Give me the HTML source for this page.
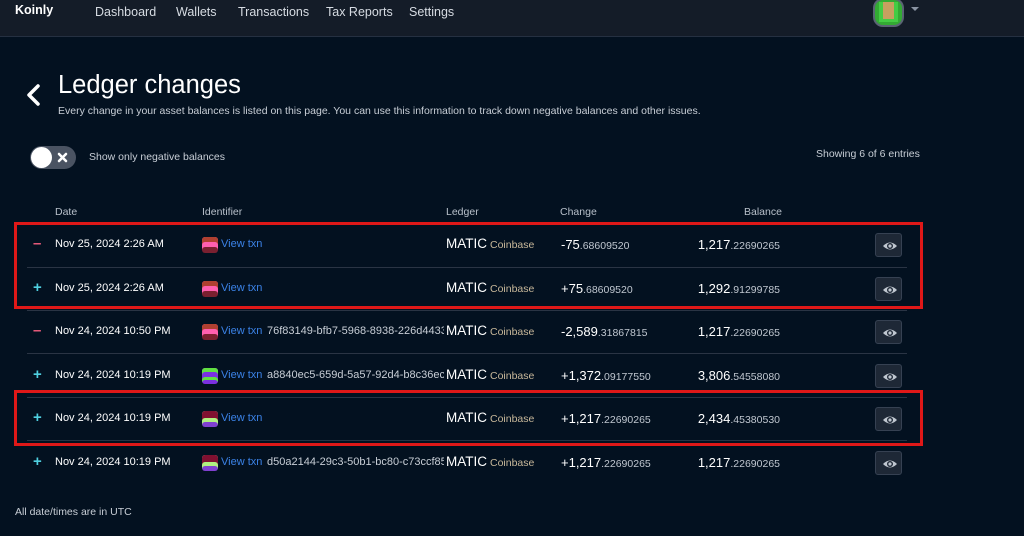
<!DOCTYPE html>
<html><head><style>
*{margin:0;padding:0;box-sizing:border-box}
body{width:1024px;height:536px;background:#031120;font-family:"Liberation Sans",sans-serif;color:#e8ecf0;position:relative;overflow:hidden}
.nav{position:absolute;left:0;top:0;width:1024px;height:37px;background:#141c28;border-bottom:1px solid #253041}
.a{position:absolute;white-space:nowrap}
.nav .a{top:5px;font-size:12.5px;color:#d6dbe2}
.logo{font-weight:bold;font-size:15.5px;color:#fff!important;top:3px!important}
.sep{position:absolute;left:27px;width:880px;height:1px;background:#2a3444}
.row .a{font-size:11px;top:0}
.date{left:55px;color:#fff}
.vt{left:221px;color:#3b82e6}
.hash{left:267px;color:#c8ced6;width:177px;overflow:hidden}
.mat{left:446px;font-size:13.5px!important;color:#fff;top:-2px!important}
.cb{left:490px;color:#c8b89a;font-size:10.5px!important;top:1px!important}
.ch{left:561px;font-size:13px!important;color:#fff;top:-1px!important}
.bal{left:640px;width:140px;text-align:right;font-size:13px!important;color:#fff;top:-1px!important}
small{font-size:10.5px;color:#c0c7d0}
.eye{position:absolute;left:875px;top:-5px;width:27px;height:24px;background:#1e2836;border:1px solid #364152;border-radius:3px}
.eye svg{position:absolute;left:6px;top:5px}
.ic{position:absolute;left:202px;top:-1px;width:16px;height:16px;border-radius:3px}
.red{position:absolute;border:3px solid #e01818}
.sg{position:absolute;left:33px;top:-3px!important;font-size:15px!important;font-weight:bold}
</style></head><body>
<div class="nav">
<div class="a logo" style="left:15px">Koinly</div>
<div class="a" style="left:95px">Dashboard</div>
<div class="a" style="left:176px">Wallets</div>
<div class="a" style="left:238px">Transactions</div>
<div class="a" style="left:326px">Tax Reports</div>
<div class="a" style="left:409px">Settings</div>
<div style="position:absolute;left:873px;top:-2px;width:31px;height:29px;border-radius:10px;border:2px solid #5a6473;background:#3a3;overflow:hidden"><div style="position:absolute;left:4px;top:2px;width:19px;height:20px;background:#c8a060;border:4px solid #4c4;border-top:none;border-bottom-width:3px"></div></div>
<div style="position:absolute;left:911px;top:7px;border:4px solid transparent;border-top:4px solid #8a94a3"></div>
</div>
<svg style="position:absolute;left:24px;top:83px" width="18" height="24"><path d="M14 3 L5 12 L14 21" stroke="#fff" stroke-width="3.5" fill="none" stroke-linecap="round" stroke-linejoin="round"/></svg>
<div class="a" style="left:58px;top:71px;font-size:25.5px;color:#fff">Ledger changes</div>
<div class="a" style="left:58px;top:105px;font-size:10.5px;color:#c8ced6">Every change in your asset balances is listed on this page. You can use this information to track down negative balances and other issues.</div>
<div style="position:absolute;left:30px;top:146px;width:46px;height:23px;border-radius:12px;background:#4a5362"><div style="position:absolute;left:1px;top:1px;width:21px;height:21px;border-radius:50%;background:#fff"></div><svg style="position:absolute;left:27px;top:6px" width="11" height="11"><path d="M2 2L9 9M9 2L2 9" stroke="#fff" stroke-width="2.6" stroke-linecap="round"/></svg></div>
<div class="a" style="left:89px;top:151px;font-size:10.5px;color:#c8ced6">Show only negative balances</div>
<div class="a" style="left:816px;top:148px;font-size:10.5px;color:#c8ced6">Showing 6 of 6 entries</div>
<div class="a" style="left:55px;top:206px;font-size:10.5px;color:#b8c0ca">Date</div>
<div class="a" style="left:202px;top:206px;font-size:10.5px;color:#b8c0ca">Identifier</div>
<div class="a" style="left:446px;top:206px;font-size:10.5px;color:#b8c0ca">Ledger</div>
<div class="a" style="left:560px;top:206px;font-size:10.5px;color:#b8c0ca">Change</div>
<div class="a" style="left:744px;top:206px;font-size:10.5px;color:#b8c0ca">Balance</div>
<div class="sep" style="top:267px"></div><div class="sep" style="top:310px"></div><div class="sep" style="top:353px"></div><div class="sep" style="top:397px"></div><div class="sep" style="top:440px"></div>
<svg width="0" height="0" style="position:absolute"><defs><g id="e"><path d="M1 7 Q8 0 15 7 Q8 14 1 7Z" fill="#c0c7d0"/><circle cx="8" cy="7" r="3" fill="#1e2836"/><circle cx="8" cy="7" r="1.6" fill="#c0c7d0"/></g></defs></svg>
<div class="row" style="position:absolute;left:0;top:238px;width:1024px;height:16px">
<div class="a sg" style="color:#e85a7a">–</div><div class="a date">Nov 25, 2024 2:26 AM</div>
<div class="ic" style="background:#7a2030;box-shadow:inset 0 5px 0 #b04030,inset 0 10px 0 #ff5fb0"></div><div class="a vt">View txn</div>
<div class="a mat">MATIC</div><div class="a cb">Coinbase</div>
<div class="a ch">-75<small>.68609520</small></div><div class="a bal">1,217<small>.22690265</small></div>
<div class="eye"><svg width="16" height="14"><use href="#e"/></svg></div></div>
<div class="row" style="position:absolute;left:0;top:282px;width:1024px;height:16px">
<div class="a sg" style="color:#4fd0e0">+</div><div class="a date">Nov 25, 2024 2:26 AM</div>
<div class="ic" style="background:#7a2030;box-shadow:inset 0 5px 0 #b04030,inset 0 10px 0 #ff5fb0"></div><div class="a vt">View txn</div>
<div class="a mat">MATIC</div><div class="a cb">Coinbase</div>
<div class="a ch">+75<small>.68609520</small></div><div class="a bal">1,292<small>.91299785</small></div>
<div class="eye"><svg width="16" height="14"><use href="#e"/></svg></div></div>
<div class="row" style="position:absolute;left:0;top:325px;width:1024px;height:16px">
<div class="a sg" style="color:#e85a7a">–</div><div class="a date">Nov 24, 2024 10:50 PM</div>
<div class="ic" style="background:#7a2030;box-shadow:inset 0 5px 0 #b04030,inset 0 10px 0 #ff5fb0"></div><div class="a vt">View txn</div><div class="a hash">76f83149-bfb7-5968-8938-226d4433c</div>
<div class="a mat">MATIC</div><div class="a cb">Coinbase</div>
<div class="a ch">-2,589<small>.31867815</small></div><div class="a bal">1,217<small>.22690265</small></div>
<div class="eye"><svg width="16" height="14"><use href="#e"/></svg></div></div>
<div class="row" style="position:absolute;left:0;top:369px;width:1024px;height:16px">
<div class="a sg" style="color:#4fd0e0">+</div><div class="a date">Nov 24, 2024 10:19 PM</div>
<div class="ic" style="background:#7a30e0;box-shadow:inset 0 4px 0 #60e040,inset 0 9px 0 #7a30e0,inset 0 12px 0 #60e040"></div><div class="a vt">View txn</div><div class="a hash">a8840ec5-659d-5a57-92d4-b8c36ecb5</div>
<div class="a mat">MATIC</div><div class="a cb">Coinbase</div>
<div class="a ch">+1,372<small>.09177550</small></div><div class="a bal">3,806<small>.54558080</small></div>
<div class="eye"><svg width="16" height="14"><use href="#e"/></svg></div></div>
<div class="row" style="position:absolute;left:0;top:412px;width:1024px;height:16px">
<div class="a sg" style="color:#4fd0e0">+</div><div class="a date">Nov 24, 2024 10:19 PM</div>
<div class="ic" style="background:#8040d0;box-shadow:inset 0 7px 0 #801030,inset 0 11px 0 #b0f080"></div><div class="a vt">View txn</div>
<div class="a mat">MATIC</div><div class="a cb">Coinbase</div>
<div class="a ch">+1,217<small>.22690265</small></div><div class="a bal">2,434<small>.45380530</small></div>
<div class="eye"><svg width="16" height="14"><use href="#e"/></svg></div></div>
<div class="row" style="position:absolute;left:0;top:456px;width:1024px;height:16px">
<div class="a sg" style="color:#4fd0e0">+</div><div class="a date">Nov 24, 2024 10:19 PM</div>
<div class="ic" style="background:#8040d0;box-shadow:inset 0 7px 0 #801030,inset 0 11px 0 #b0f080"></div><div class="a vt">View txn</div><div class="a hash">d50a2144-29c3-50b1-bc80-c73ccf857</div>
<div class="a mat">MATIC</div><div class="a cb">Coinbase</div>
<div class="a ch">+1,217<small>.22690265</small></div><div class="a bal">1,217<small>.22690265</small></div>
<div class="eye"><svg width="16" height="14"><use href="#e"/></svg></div></div>
<div class="a" style="left:15px;top:506px;font-size:10.5px;color:#c8ced6">All date/times are in UTC</div>
<div class="red" style="left:14px;top:222px;width:909px;height:87px"></div>
<div class="red" style="left:14px;top:390px;width:909px;height:56px"></div>
</body></html>
